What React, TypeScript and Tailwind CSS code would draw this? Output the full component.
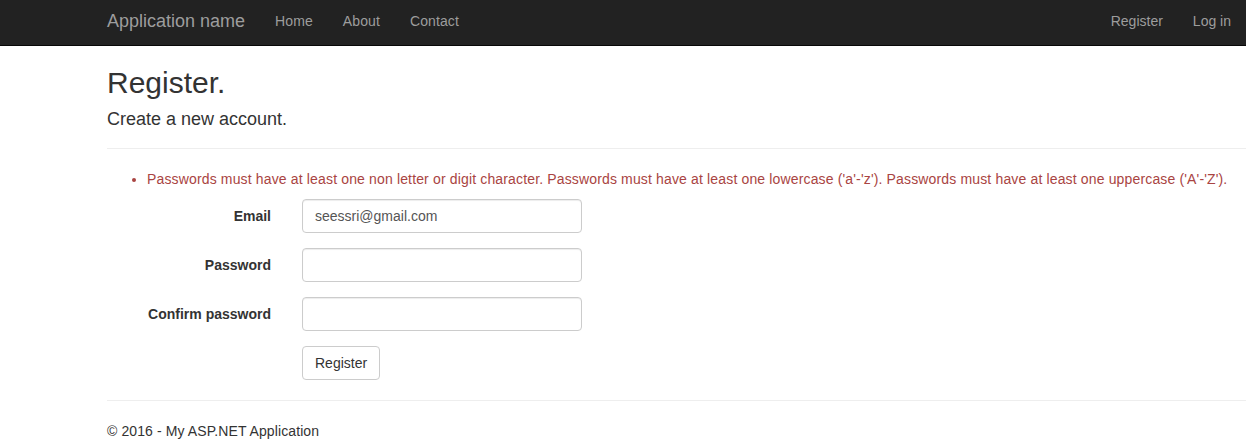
import React from "react";

export default function App() {
  return (
    <div
      className="w-[1246px] min-h-[447px] overflow-hidden bg-white text-[14px] leading-[20px] text-[#333]"
      style={{ fontFamily: '"Liberation Sans", Arial, Helvetica, sans-serif' }}
    >
      {/* Navbar */}
      <div className="h-[46px] bg-[#222] border-b border-[#080808] flex items-start pl-[107px]">
        <a className="text-[18px] leading-[20px] text-[#9d9d9d] pt-[11px] pr-[15px]">Application name</a>
        <ul className="flex tracking-[0.1px]">
          <li><a className="block px-[15px] pt-[11px] text-[#9d9d9d]">Home</a></li>
          <li><a className="block px-[15px] pt-[11px] text-[#9d9d9d]">About</a></li>
          <li><a className="block px-[15px] pt-[11px] text-[#9d9d9d]">Contact</a></li>
        </ul>
        <ul className="flex ml-auto">
          <li><a className="block px-[15px] pt-[11px] text-[#9d9d9d]">Register</a></li>
          <li><a className="block px-[15px] pt-[11px] text-[#9d9d9d]">Log in</a></li>
        </ul>
      </div>

      {/* Body */}
      <div className="ml-[107px]">
        <h2 className="mt-[20px] text-[30px] leading-[33px] font-normal text-[#333]">Register.</h2>
        <h4 className="mt-[10px] text-[18px] leading-[20px] font-normal text-[#333]">Create a new account.</h4>
        <hr className="mt-[19px] mb-[20px] border-0 border-t border-[#eee]" />
        <ul className="list-disc pl-[40px] mb-[10px] text-[#a94442] whitespace-nowrap">
          <li className="tracking-[0.15px]">
            Passwords must have at least one non letter or digit character. Passwords must have at least one lowercase ('a'-'z'). Passwords must have at least one uppercase ('A'-'Z').
          </li>
        </ul>

        <div className="flex flex-col gap-[15px]">
          <div className="flex items-start">
            <label className="w-[164px] text-right font-bold pt-[7px]">Email</label>
            <div className="pl-[31px]">
              <input
                readOnly
                value="seessri@gmail.com"
                className="w-[280px] h-[34px] px-[12px] py-[6px] border border-[#ccc] rounded-[4px] text-[#555] shadow-[inset_0_1px_1px_rgba(0,0,0,0.075)] outline-none"
              />
            </div>
          </div>
          <div className="flex items-start">
            <label className="w-[164px] text-right font-bold pt-[7px]">Password</label>
            <div className="pl-[31px]">
              <input
                readOnly
                type="password"
                className="w-[280px] h-[34px] px-[12px] py-[6px] border border-[#ccc] rounded-[4px] text-[#555] shadow-[inset_0_1px_1px_rgba(0,0,0,0.075)] outline-none"
              />
            </div>
          </div>
          <div className="flex items-start">
            <label className="w-[164px] text-right font-bold pt-[7px]">Confirm password</label>
            <div className="pl-[31px]">
              <input
                readOnly
                type="password"
                className="w-[280px] h-[34px] px-[12px] py-[6px] border border-[#ccc] rounded-[4px] text-[#555] shadow-[inset_0_1px_1px_rgba(0,0,0,0.075)] outline-none"
              />
            </div>
          </div>
          <div className="flex items-start">
            <div className="w-[164px]" />
            <div className="pl-[31px]">
              <button className="h-[34px] px-[12px] py-[6px] border border-[#ccc] rounded-[4px] bg-white text-[#333]">
                Register
              </button>
            </div>
          </div>
        </div>

        <hr className="mt-[20px] mb-[20px] border-0 border-t border-[#eee]" />
        <p className="text-[#333] tracking-[0.1px]">© 2016 - My ASP.NET Application</p>
      </div>
    </div>
  );
}
